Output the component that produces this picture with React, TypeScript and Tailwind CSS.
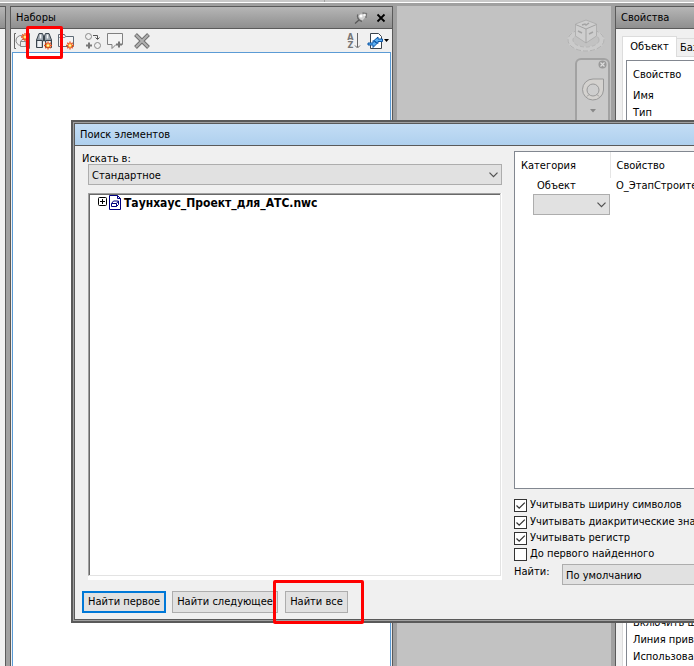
import type { ReactNode } from "react";

const HEAD_ROWS = ["Свойство", "Имя", "Тип"];
const TAIL_ROWS = ["Включить шаблон", "Линия привязки", "Использовать"];

function Star({ x, y }: { x: number; y: number }) {
  return (
    <g transform={`translate(${x} ${y})`}>
      <path d="M0-4V4M-4 0H4M-2.700-2.700 2.700 2.700M2.700-2.700-2.700 2.700" stroke="#ee4f1a" strokeWidth="1.300" />
      <circle r="1.700" fill="#ffd84a" />
      <circle r="0.700" fill="#fff" />
    </g>
  );
}

function ToolButton({ label, children }: { label: string; children: ReactNode }) {
  return (
    <button type="button" aria-label={label} className="flex h-5 w-[22px] shrink-0 items-center justify-center">
      <svg width="18" height="18" viewBox="0 0 18 18" fill="none">
        {children}
      </svg>
    </button>
  );
}

function TitleBar({ title, children }: { title: string; children?: ReactNode }) {
  return (
    <header className="flex h-[23px] shrink-0 items-center justify-between border-y border-[#5a5a5a] bg-linear-to-b from-[#b6b6b6] to-[#8f8f8f] pr-1 pl-[5px]">
      <h2 className="pt-px whitespace-nowrap">{title}</h2>
      {children}
    </header>
  );
}

function Dropdown({ id, label, value, className }: { id: string; label: string; value: string; className: string }) {
  return (
    <div className={`relative ${className}`}>
      <select
        id={id}
        aria-label={label}
        className="block h-[21px] w-full appearance-none border border-[#adadad] bg-[#e1e1e1] pt-0.5 pl-[3px] leading-4"
      >
        <option>{value}</option>
      </select>
      <svg className="pointer-events-none absolute top-2 right-1" width="9" height="6" viewBox="0 0 9 6" fill="none">
        <path d="M.5.7 4.5 4.7 8.5.7" stroke="#505050" strokeWidth="1.2" />
      </svg>
    </div>
  );
}

function Check({ label, checked }: { label: string; checked?: boolean }) {
  return (
    <label className="flex h-4 items-center gap-[3px] whitespace-nowrap first:mb-px">
      <span className="relative size-[13px] shrink-0">
        <input
          type="checkbox"
          defaultChecked={checked}
          className="peer block size-[13px] appearance-none border border-[#333] bg-white"
        />
        <svg
          className="pointer-events-none absolute inset-0 hidden peer-checked:block"
          width="13"
          height="13"
          viewBox="0 0 13 13"
          fill="none"
        >
          <path d="M2.5 6.5 5.2 9.2 10.8 3.6" stroke="#333" strokeWidth="1.3" />
        </svg>
      </span>
      {label}
    </label>
  );
}

function SetsPanel() {
  return (
    <section className="flex w-[383px] shrink-0 flex-col border-x border-[#5a5a5a] bg-[#f0f0f0]">
      <TitleBar title="Наборы">
        <div className="flex items-center gap-2">
          <button type="button" aria-label="Закрепить">
            <svg width="14" height="12" viewBox="0 0 14 12" fill="none">
              <path d="M1 11.500 5 8" stroke="#555" strokeWidth="1.200" />
              <path d="M4 2.500C2.500 4.500 4 8.500 8 9.500" stroke="#666" strokeWidth="1.300" />
              <path d="M4.500 3.500 8 1.500l3.500 3.500-3 3.500C6 8 4.500 6 4.500 3.500Z" fill="#d2d2d2" />
              <path d="M8.500 1 12.500 1.500 12 6" stroke="#777" strokeWidth="1.300" />
              <circle cx="7" cy="4" r="1.500" fill="#fff" />
              <circle cx="10.500" cy="3" r="1.300" fill="#f4f4f4" />
            </svg>
          </button>
          <button type="button" aria-label="Закрыть" className="pr-[2px]">
            <svg width="10" height="10" viewBox="0 0 10 10" fill="none">
              <path d="M1.500 1.500 8.500 8.500M8.500 1.500 1.500 8.500" stroke="#000" strokeWidth="1.800" />
            </svg>
          </button>
        </div>
      </TitleBar>
      <div className="flex h-[23px] shrink-0 items-center justify-between">
        <div className="flex items-center">
          <ToolButton label="Сохранить выбор">
            <path d="M3 1.500H1.500v15H3M15 1.500h1.500v15H15" stroke="#666" />
            <path d="M11 4.500a5 5 0 1 0-3 9" stroke="#8a8a8a" />
            <path d="M7.500 9.500 9 7.500h5.500v5l-1.500 2H7.500ZM7.500 9.500H13v5M13 9.500l1.500-2" fill="#eee" stroke="#8a8a8a" />
            <Star x={12} y={5} />
          </ToolButton>
          <ToolButton label="Найти элементы">
            <path d="M4 1.500h3.500L8.500 4v5h-1v6.500h-6V8Z" fill="#9aa3ab" stroke="#3b444d" />
            <path d="M10.500 1.500H14L16.500 8v7.500h-6V9h-1V4Z" fill="#9aa3ab" stroke="#3b444d" />
            <path d="M5.500 2.500v4M12.500 2.500v4" stroke="#f4f6f8" strokeWidth="1.600" />
            <path d="M2.500 9h4v6h-4ZM11.500 9h4v6h-4Z" fill="#f0f2f4" />
            <path d="M1.500 8.500h6M10.500 8.500h6" stroke="#3b444d" />
            <Star x={13} y={13.5} />
          </ToolButton>
          <ToolButton label="Создать папку">
            <path d="M1.500 14.500V2.500h6l1 2h8v10Z" fill="#f4f4f4" stroke="#5f6b76" />
            <path d="M2 5.500h6l1-1" stroke="#8b969f" />
            <Star x={13} y={13.5} />
          </ToolButton>
          <span className="w-[5px]" />
          <ToolButton label="Дублировать">
            <circle cx="4.500" cy="4.500" r="3" stroke="#8a8a8a" />
            <circle cx="13.500" cy="13.500" r="3" stroke="#8a8a8a" />
            <path d="M2 13.500h6M5 10.500v6" stroke="#777" strokeWidth="2" />
            <path d="M9 3.500h4.500V7M11.500 5.500l2 2 2-2" stroke="#555" />
          </ToolButton>
          <ToolButton label="Добавить комментарий">
            <path d="M1.500 1.500h15v11H10l-4 4v-4H1.500Z" fill="#f4f4f4" stroke="#808080" />
            <path d="M10 12.500h6M13 9.500v6" stroke="#777" strokeWidth="2" />
          </ToolButton>
          <span className="w-[5px]" />
          <ToolButton label="Удалить">
            <path d="M2.500 2.500 15.500 15.500M15.500 2.500 2.500 15.500" stroke="#707070" strokeWidth="4" />
            <path d="M3 3 15 15M15 3 3 15" stroke="#b0b0b0" strokeWidth="2" />
          </ToolButton>
        </div>
        <div className="flex items-center gap-px pr-[2px]">
          <button type="button" aria-label="Сортировать" className="flex h-5 w-[22px] items-center justify-center">
            <span className="flex w-[7px] flex-col text-center text-[9px] leading-[8px] font-bold text-[#777]">
              <span>A</span>
              <span>Z</span>
            </span>
            <svg width="7" height="18" viewBox="0 0 7 18" fill="none">
              <path d="M3.500 1v14M1 13.500l2.500 2.500L6 13.500" stroke="#666" />
            </svg>
          </button>
          <button type="button" aria-label="Импорт и экспорт" className="flex items-center">
            <svg width="24" height="18" viewBox="0 0 24 18" fill="none">
              <path d="M4.500 1.500h8l3 3v12h-11Z" fill="#fff" stroke="#3b444d" />
              <path d="M8 8.500 12 5v2h4.500v2.500H12v2ZM11 11.500 7 15.500v-2.500H2v-2h5V8.500Z" fill="#5cb0f2" stroke="#0b55a5" />
              <path d="M18 7h5l-2.500 3Z" fill="#000" />
            </svg>
          </button>
        </div>
      </div>
      <div className="mr-px ml-px flex-1 border border-b-0 border-[#5b9bd5] bg-white" />
    </section>
  );
}

function Viewport() {
  return (
    <main className="mx-1 flex flex-1 flex-col items-end bg-[#c2c2c2] pt-3">
      <svg className="mr-1.5 shrink-0" width="38" height="36" viewBox="0 0 38 36" fill="none">
        <ellipse cx="19" cy="22" rx="16" ry="9" stroke="#cbcbcb" strokeWidth="5" />
        <ellipse cx="19" cy="22" rx="18" ry="11" stroke="#b2b2b2" strokeDasharray="5 2" />
        <ellipse cx="19" cy="22" rx="13" ry="7" stroke="#b6b6b6" strokeDasharray="4 2" />
        <path d="M19 2 29.500 6v12L19 25 8.500 18V6Z" fill="#cecece" stroke="#b0b0b0" />
        <path d="M8.500 6.500 19 11l10.500-4.500M19 11v14" stroke="#a4a4a4" />
        <path d="M15 7l3-1 1 1 3-2M11 13l4 2M22 16l4-2" stroke="#a4a4a4" strokeWidth="1.500" />
      </svg>
      <div className="mt-1 mr-px flex h-40 w-[35px] shrink-0 flex-col items-center rounded-md border-2 border-[#a2a2a2] bg-[#c9c9c9]">
        <svg width="31" height="56" viewBox="0 0 31 56" fill="none">
          <circle cx="25.500" cy="4.500" r="4" fill="#999" />
          <path d="M23.500 2.500l4 4M27.500 2.500l-4 4" stroke="#ddd" strokeWidth="1.200" />
          <path d="M16 19h10.500V30A10.500 10.500 0 1 1 16 19Z" fill="#d4d2cf" stroke="#999" />
          <circle cx="16" cy="30" r="6" fill="#cecece" stroke="#999" />
          <path d="M12 34.500l-2 2M20 34.500l2 2" stroke="#999" />
          <path d="M13 49h6l-3 3.500Z" fill="#888" />
        </svg>
      </div>
    </main>
  );
}

function PropertiesPanel() {
  return (
    <section className="flex w-[79px] shrink-0 flex-col overflow-hidden border-l border-[#5a5a5a] bg-[#f0f0f0]">
      <TitleBar title="Свойства" />
      <div className="flex min-h-0 flex-1 flex-col pt-[7px] pl-1.5">
        <div role="tablist" className="flex h-[21px] shrink-0 items-end whitespace-nowrap">
          <button type="button" role="tab" aria-selected="true" className="h-full w-[55px] shrink-0 border border-b-0 border-[#dcdcdc] bg-white">
            Объект
          </button>
          <button type="button" role="tab" aria-selected="false" className="h-[19px] shrink-0 border border-l-0 border-[#dcdcdc] px-[3px]">
            Базовый
          </button>
        </div>
        <div className="flex min-h-0 flex-1 flex-col border-l border-[#dcdcdc] bg-white pt-[3px] pl-[3px]">
          <div className="flex min-h-0 flex-1 flex-col justify-between border-t border-l border-[#828790] pt-[5px] pb-px pl-1.5 leading-[17px] whitespace-nowrap">
            <ul>
              {HEAD_ROWS.map((row) => (
                <li key={row} className="first:mb-1">
                  {row}
                </li>
              ))}
            </ul>
            <ul>
              {TAIL_ROWS.map((row) => (
                <li key={row}>{row}</li>
              ))}
            </ul>
          </div>
        </div>
      </div>
    </section>
  );
}

function ElementTree() {
  return (
    <div className="h-[387px] border-r border-b-4 border-white">
      <div role="tree" className="h-full border border-t-[#a0a0a0] border-r-[#e3e3e3] border-b-[#e3e3e3] border-l-[#a0a0a0] bg-white">
        <div className="h-full border-t border-l border-[#696969] pl-[7px]">
          <div role="treeitem" className="flex h-[15px] items-center text-[12px] leading-[14px] font-bold whitespace-nowrap">
            <svg width="27" height="15" viewBox="0 0 27 15" fill="none">
              <rect x="1.500" y="2.500" width="8" height="8" rx="1" stroke="#000" />
              <path d="M3 6.500h5M5.500 4v5" stroke="#000" />
              <path d="M12.500.500h8l3 3v11h-11Z" fill="#fff" stroke="#000080" />
              <path d="M20.500.500v3h3M14.500 8.500h5v3h-5ZM14.500 8.500l2-2.500h5v3.500l-2 2M19.500 8.500l2-2.500" stroke="#000080" />
            </svg>
            Таунхаус_Проект_для_АТС.nwc
          </div>
        </div>
      </div>
    </div>
  );
}

function ConditionTable() {
  return (
    <table className="w-full table-fixed border-collapse text-left whitespace-nowrap">
      <colgroup>
        <col className="w-[95px]" />
        <col />
      </colgroup>
      <thead>
        <tr className="h-[26px]">
          <th className="border-r border-[#e5e5e5] pt-px pl-1.5 font-normal">Категория</th>
          <th className="pt-px pl-1.5 font-normal">Свойство</th>
        </tr>
      </thead>
      <tbody>
        <tr className="h-4">
          <td className="pl-[22px]">Объект</td>
          <td className="pl-1.5">О_ЭтапСтроительства</td>
        </tr>
        <tr>
          <td className="pl-[18px]">
            <Dropdown id="category" label="Категория" value="" className="w-[77px]" />
          </td>
          <td />
        </tr>
      </tbody>
    </table>
  );
}

function FindDialog() {
  return (
    <section
      role="dialog"
      aria-label="Поиск элементов"
      className="absolute top-[120px] right-0 left-[71px] overflow-hidden border-y-2 border-l-2 border-[#5a5a5a] bg-[#a0a0a0] py-px pl-px"
    >
      <div className="border-y border-l border-[#5a5a5a] bg-[#f0f0f0]">
        <header className="flex h-[22px] items-center border-b border-[#5a5a5a] bg-linear-to-b from-[#c3ddf5] to-[#afd0ee] pl-[5px]">
          <h2 className="pt-px">Поиск элементов</h2>
        </header>
        <div className="flex gap-3 pt-[5px] pl-[7px]">
          <div className="w-[420px] shrink-0">
            <label htmlFor="scope" className="block h-[13px] leading-4">
              Искать в:
            </label>
            <div className="flex flex-col gap-2 pl-1.5">
              <Dropdown id="scope" label="Искать в:" value="Стандартное" className="w-full" />
              <ElementTree />
            </div>
            <div className="flex h-[39px] items-start pt-[11px]">
              <button type="button" className="h-[22px] w-[84px] border-2 border-[#0078d7] bg-[#e1e1e1] whitespace-nowrap">
                Найти первое
              </button>
              <button type="button" className="ml-1.5 h-[22px] w-[106px] border border-[#adadad] bg-[#e1e1e1] whitespace-nowrap">
                Найти следующее
              </button>
              <button type="button" className="ml-[7px] h-[22px] w-[63px] border border-[#adadad] bg-[#e1e1e1] whitespace-nowrap">
                Найти все
              </button>
            </div>
          </div>
          <div className="min-w-0 flex-1">
            <div className="h-[338px] overflow-hidden border border-r-0 border-[#828790] bg-white">
              <ConditionTable />
            </div>
            <div className="mt-2 flex flex-col overflow-hidden">
              <Check label="Учитывать ширину символов" checked />
              <Check label="Учитывать диакритические знаки" checked />
              <Check label="Учитывать регистр" checked />
              <Check label="До первого найденного" />
            </div>
            <div className="mt-0.5 flex overflow-hidden">
              <label htmlFor="mode" className="w-12 shrink-0 leading-4">
                Найти:
              </label>
              <Dropdown id="mode" label="Найти:" value="По умолчанию" className="w-40 shrink-0" />
            </div>
          </div>
        </div>
      </div>
    </section>
  );
}

export default function App() {
  return (
    <div className="relative flex h-screen flex-col overflow-hidden bg-[#a0a0a0] font-['DejaVu_Sans_Condensed','DejaVu_Sans',sans-serif] text-[11px] leading-4 text-black">
      <div className="flex h-[3px] shrink-0 gap-px border-b border-white">
        <div className="w-[324px] bg-[#c8c8c8]" />
        <div className="flex-1 bg-[#c8c8c8]" />
      </div>
      <div className="mt-[3px] flex min-h-0 flex-1">
        <aside className="mr-1 w-1.5 shrink-0 border-r border-[#5a5a5a] bg-[#f0f0f0]">
          <div className="h-[23px] border-y border-[#5a5a5a] bg-linear-to-b from-[#b6b6b6] to-[#8f8f8f]" />
        </aside>
        <SetsPanel />
        <Viewport />
        <PropertiesPanel />
      </div>
      <FindDialog />
      <div className="pointer-events-none absolute top-[26px] left-[26px] h-[33px] w-[37px] rounded-xs border-3 border-[#f00]" />
      <div className="pointer-events-none absolute top-[580px] left-[273px] h-11 w-[91px] rounded-xs border-3 border-[#f00]" />
    </div>
  );
}
